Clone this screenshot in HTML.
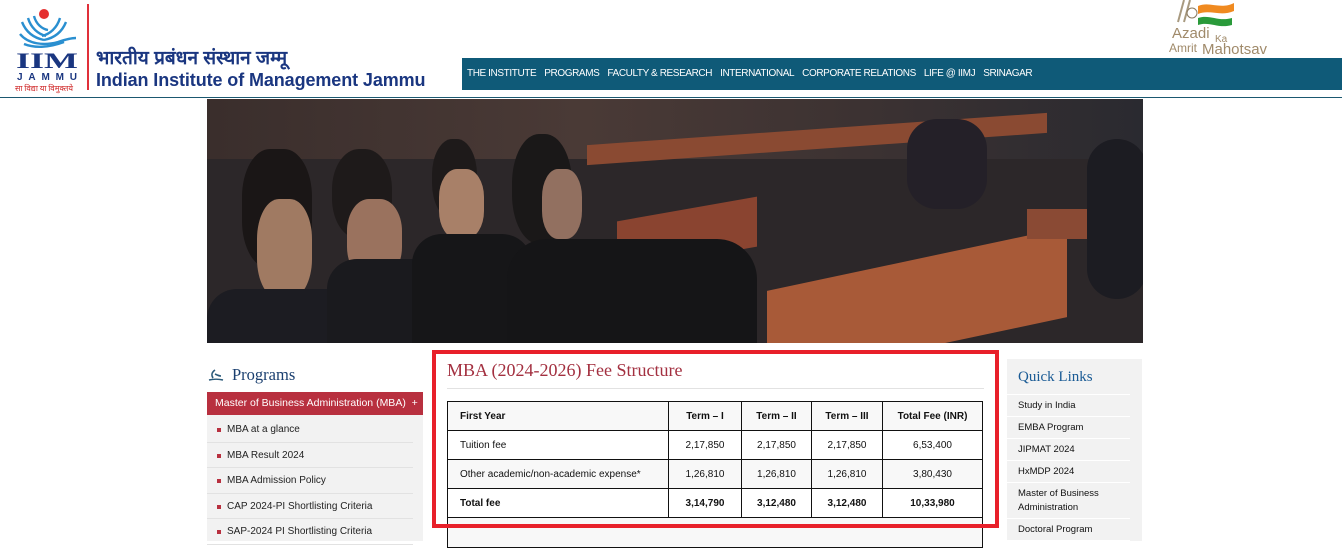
<!DOCTYPE html>
<html><head><meta charset="utf-8"><style>
*{margin:0;padding:0;box-sizing:border-box}
body{width:1342px;height:541px;overflow:hidden;background:#fff;font-family:"Liberation Sans",Arial,sans-serif;position:relative}
.abs{position:absolute}
.nav{left:462px;top:58px;width:880px;height:32px;background:#0f5a78;color:#fff;font-size:10px;letter-spacing:-0.4px;line-height:32px;padding-left:5px;white-space:nowrap}
.nav span{margin-right:8px}
.hero{left:207px;top:99px;width:936px;height:244px;overflow:hidden;background:#2c2729}
.sb li{list-style:none;font-size:10px;color:#222;height:25.5px;line-height:25.5px;padding-left:20px;position:relative;border-bottom:1px solid #e2e2e2;margin:0 10px 0 0}
.sb li:before{content:"";position:absolute;left:10px;top:11px;width:4px;height:4px;background:#b8303f}
table{border-collapse:collapse;font-size:10px;color:#111}
td{border:1px solid #111;height:29px;text-align:center}
td:first-child{text-align:left;padding-left:12px}
.ql div{font-size:9.5px;color:#111;border-bottom:1px solid #fff;padding:4px 0 3px 11px;margin-right:12px;line-height:14px}
</style></head><body>
<svg class="abs" style="left:14px;top:4px" width="66" height="90" viewBox="0 0 66 90">
<circle cx="30" cy="10" r="5" fill="#e53030"/>
<g fill="none" stroke="#2a8fd0" stroke-width="2.4">
<path d="M8 18c4 10 12 16 22 18"/><path d="M14 14c3 10 10 16 18 18"/><path d="M20 12c2 8 8 13 14 14"/>
<path d="M52 18c-4 10-12 16-22 18"/><path d="M46 14c-3 10-10 16-18 18"/>
<path d="M6 30c8 10 24 12 38 8c6-2 12-4 18-4"/><path d="M10 40c10 4 24 4 40-2"/></g>
<text x="2" y="64" font-family="Liberation Serif" font-weight="bold" font-size="22" fill="#1a3680" textLength="62" lengthAdjust="spacingAndGlyphs">IIM</text>
<text x="3" y="76" font-weight="bold" font-size="10" fill="#1a3680" textLength="60" lengthAdjust="spacing">JAMMU</text>
<text x="1" y="87" font-size="8" fill="#d02a2a" font-family="Noto Sans CJK SC,sans-serif">सा विद्या या विमुक्तये</text>
</svg>
<div class="abs" style="left:87px;top:4px;width:2px;height:86px;background:#e0303a"></div>
<div class="abs" style="left:96px;top:44px;font-size:19px;font-weight:bold;color:#1a3680;font-family:'Liberation Sans','Noto Sans CJK SC',sans-serif">भारतीय प्रबंधन संस्थान जम्मू</div>
<div class="abs" style="left:96px;top:70px;font-size:18px;font-weight:bold;color:#1a3680;letter-spacing:-0.1px">Indian Institute of Management Jammu</div>
<svg class="abs" style="left:1168px;top:0" width="110" height="56">
<path d="M16 0l-6 22M22 0l-6 22" stroke="#a89a80" stroke-width="2"/>
<circle cx="24" cy="13" r="5" fill="none" stroke="#8a7a60"/>
<path d="M30 6c12-5 22 4 36-3v8c-14 6-24-2-36 3z" fill="#f08a20"/>
<path d="M30 18c12-4 20 4 34 0v7c-14 4-22-4-34 0z" fill="#2a9a3a"/>
<text x="4" y="38" font-size="15" fill="#a08a6a">Azadi</text><text x="47" y="42" font-size="10" fill="#a08a6a">Ka</text>
<text x="1" y="52" font-size="12" fill="#a08a6a">Amrit</text><text x="34" y="54" font-size="15" fill="#a08a6a">Mahotsav</text>
</svg>
<div class="abs nav"><span>THE INSTITUTE</span><span>PROGRAMS</span><span>FACULTY &amp; RESEARCH</span><span>INTERNATIONAL</span><span>CORPORATE RELATIONS</span><span>LIFE @ IIMJ</span><span>SRINAGAR</span></div>
<div class="abs" style="left:0;top:97px;width:1342px;height:1px;background:#1b5870"></div>
<div class="abs hero">
<div class="abs" style="left:0;top:0;width:936px;height:60px;background:linear-gradient(90deg,#3a2e2c,#4a3a36 40%,#3c3232 70%,#2a2a30)"></div>
<div class="abs" style="left:380px;top:30px;width:460px;height:20px;background:#8a4a32;transform:skewY(-4deg)"></div>
<div class="abs" style="left:410px;top:110px;width:140px;height:50px;background:#8a4430;transform:skewY(-10deg)"></div>
<div class="abs" style="left:560px;top:160px;width:300px;height:90px;background:#a85a38;transform:skewY(-12deg)"></div>
<div class="abs" style="left:820px;top:110px;width:116px;height:30px;background:#8a4a34"></div>
<div class="abs" style="left:35px;top:50px;width:70px;height:120px;border-radius:40%;background:#1a1616"></div>
<div class="abs" style="left:50px;top:100px;width:55px;height:100px;border-radius:40%;background:#a07a62"></div>
<div class="abs" style="left:0;top:190px;width:200px;height:60px;background:#1c1c22;border-radius:30px 30px 0 0"></div>
<div class="abs" style="left:125px;top:50px;width:60px;height:90px;border-radius:45%;background:#1e1a1a"></div>
<div class="abs" style="left:140px;top:100px;width:55px;height:80px;border-radius:40%;background:#9a725e"></div>
<div class="abs" style="left:120px;top:160px;width:150px;height:90px;background:#1a1a1e;border-radius:30px 30px 0 0"></div>
<div class="abs" style="left:225px;top:40px;width:45px;height:80px;border-radius:45%;background:#1e1a1a"></div>
<div class="abs" style="left:232px;top:70px;width:45px;height:70px;border-radius:40%;background:#a88068"></div>
<div class="abs" style="left:205px;top:135px;width:120px;height:115px;background:#161618;border-radius:30px 30px 0 0"></div>
<div class="abs" style="left:305px;top:35px;width:60px;height:110px;border-radius:45%;background:#1a1818"></div>
<div class="abs" style="left:335px;top:70px;width:40px;height:70px;border-radius:40%;background:#927060"></div>
<div class="abs" style="left:300px;top:140px;width:250px;height:110px;background:#151517;border-radius:40px 40px 0 0"></div>
<div class="abs" style="left:880px;top:40px;width:60px;height:160px;background:#1c1c22;border-radius:30px"></div>
<div class="abs" style="left:700px;top:20px;width:80px;height:90px;background:#242028;border-radius:30px"></div>
</div>
<svg class="abs" style="left:207px;top:368px" width="18" height="14"><path d="M2 12c4-1 10-1 14 0M6 10c-2-3-1-6 2-8M8 6c2 1 4 2 6 2" stroke="#2a5a7a" stroke-width="1.6" fill="none"/></svg>
<div class="abs" style="left:232px;top:365px;font-family:'Liberation Serif',serif;font-size:16.5px;color:#1a3f6f">Programs</div>
<div class="abs" style="left:207px;top:392px;width:216px;height:23px;background:#b8303f;color:#fff;font-size:10.5px;line-height:23px;padding-left:8px">Master of Business Administration (MBA) &nbsp;+</div>
<ul class="abs sb" style="left:207px;top:415px;width:216px;height:126px;background:#f2f2f2;padding-top:2px">
<li>MBA at a glance</li><li>MBA Result 2024</li><li>MBA Admission Policy</li><li>CAP 2024-PI Shortlisting Criteria</li><li>SAP-2024 PI Shortlisting Criteria</li></ul>
<div class="abs" style="left:447px;top:360px;font-family:'Liberation Serif',serif;font-size:18px;color:#a33040">MBA (2024-2026) Fee Structure</div>
<div class="abs" style="left:447px;top:388px;width:537px;height:1px;background:#e2e2e2"></div>
<table class="abs" style="left:447px;top:401px;width:536px">
<tr style="background:#f8f8f8;font-weight:bold"><td style="width:221px">First Year</td><td style="width:73px">Term – I</td><td style="width:70px">Term – II</td><td style="width:71px">Term – III</td><td>Total Fee (INR)</td></tr>
<tr><td>Tuition fee</td><td>2,17,850</td><td>2,17,850</td><td>2,17,850</td><td>6,53,400</td></tr>
<tr style="background:#f8f8f8"><td>Other academic/non-academic expense*</td><td>1,26,810</td><td>1,26,810</td><td>1,26,810</td><td>3,80,430</td></tr>
<tr style="font-weight:bold"><td>Total fee</td><td>3,14,790</td><td>3,12,480</td><td>3,12,480</td><td>10,33,980</td></tr>
<tr style="background:#f8f8f8"><td colspan="5" style="height:30px"></td></tr>
</table>
<div class="abs" style="left:432px;top:350px;width:567px;height:178px;border:4px solid #e8202a"></div>
<div class="abs ql" style="left:1007px;top:359px;width:135px;height:182px;background:#f2f2f2">
<p style="font-family:'Liberation Serif',serif;font-size:15px;color:#1a5b95;padding:10px 0 8px 11px;border-bottom:1px solid #fff;margin-right:12px">Quick Links</p>
<div>Study in India</div><div>EMBA Program</div><div>JIPMAT 2024</div><div>HxMDP 2024</div><div>Master of Business Administration</div><div>Doctoral Program</div>
</div>
</body></html>
